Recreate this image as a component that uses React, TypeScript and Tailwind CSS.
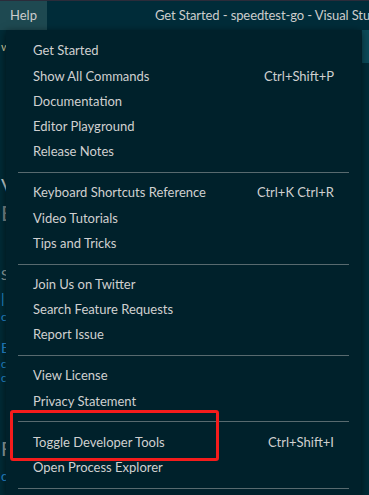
const font = "font-['Segoe_UI','Lato','Noto_Sans',sans-serif]";

type Entry = { label: string; keys?: string } | "sep";

const entries: Entry[] = [
  { label: "Get Started" },
  { label: "Show All Commands", keys: "Ctrl+Shift+P" },
  { label: "Documentation" },
  { label: "Editor Playground" },
  { label: "Release Notes" },
  "sep",
  { label: "Keyboard Shortcuts Reference", keys: "Ctrl+K Ctrl+R" },
  { label: "Video Tutorials" },
  { label: "Tips and Tricks" },
  "sep",
  { label: "Join Us on Twitter" },
  { label: "Search Feature Requests" },
  { label: "Report Issue" },
  "sep",
  { label: "View License" },
  { label: "Privacy Statement" },
  "sep",
  { label: "Toggle Developer Tools", keys: "Ctrl+Shift+I" },
  { label: "Open Process Explorer" },
  "sep",
];

// bits of the welcome page that peek out left of the menu
const EditorBehind = () => (
  <div className="flex w-[6px] flex-col overflow-hidden pl-[1px] whitespace-nowrap">
    <div className="mt-[9px] h-[16px] leading-[16px] text-[12px] text-[#d8cfa0]">welcome</div>
    <div className="mt-[118px] h-[24px] leading-[24px] text-[20px] text-[#c5d0d0]">Visual Studio Code</div>
    <div className="mt-[4px] h-[24px] leading-[24px] text-[22px] text-[#7f8c8d]">Editing evolved</div>
    <div className="mt-[40px] h-[20px] leading-[20px] text-[14px] text-[#93a1a1]">Start</div>
    <div className="mt-[5px] h-[18px] leading-[18px] text-[14px] text-[#268bd2]">| New File...</div>
    <div className="h-[18px] leading-[18px] text-[12px] text-[#268bd2]">c Open File...</div>
    <div className="mt-[13px] h-[18px] leading-[18px] text-[14px] text-[#268bd2]">E Open Folder...</div>
    <div className="h-[14px] leading-[14px] text-[11px] text-[#268bd2]">c Clone</div>
    <div className="h-[14px] leading-[14px] text-[11px] text-[#268bd2]">c Connect</div>
    <div className="mt-[51px] h-[24px] leading-[24px] text-[20px] text-[#93a1a1]">Fundamentals</div>
    <div className="mt-[7px] h-[18px] leading-[18px] text-[13px] text-[#268bd2]">c more</div>
  </div>
);

const HelpMenu = () => (
  <div className="absolute left-[6px] top-0 bottom-0 w-[355px] bg-[#00212b] pt-[8.5px] shadow-[0_2px_8px_rgba(0,0,0,0.6)] text-[13px] text-[#d0d0d0]">
    {entries.map((e, i) =>
      e === "sep" ? (
        <div key={i} className="mx-[12px] my-[7.4px] h-px bg-[#586a6f]" />
      ) : (
        <div key={i} className="flex h-[25.25px] items-center justify-between px-[27px]">
          <span>{e.label}</span>
          {e.keys && <span>{e.keys}</span>}
        </div>
      )
    )}
  </div>
);

export default function App() {
  return (
    <div className={`flex h-[495px] w-[369px] flex-col overflow-hidden bg-[#002b36] ${font}`}>
      <div className="h-px bg-[#2b2c3a]" />
      <div className="flex h-[29px] items-stretch bg-[#002c39] text-[13px] text-[#cccccc]">
        <div className="w-[5px] bg-[#0a2f38]" />
        <div className="flex items-center bg-[#1e4951] px-[10px]">Help</div>
        <div className="ml-[108px] flex items-center whitespace-nowrap tracking-[-0.1px]">
          Get Started - speedtest-go - Visual Studio Code
        </div>
      </div>
      <div className="relative flex-1">
        <EditorBehind />
        <div className="absolute right-0 top-0 h-[33px] w-[7px] bg-[#0b4a58]" />
        <HelpMenu />
        <div className="absolute left-[10px] top-[380px] h-[51px] w-[209px] rounded-[3px] border-[3px] border-[#f41c1c]" />
      </div>
    </div>
  );
}
